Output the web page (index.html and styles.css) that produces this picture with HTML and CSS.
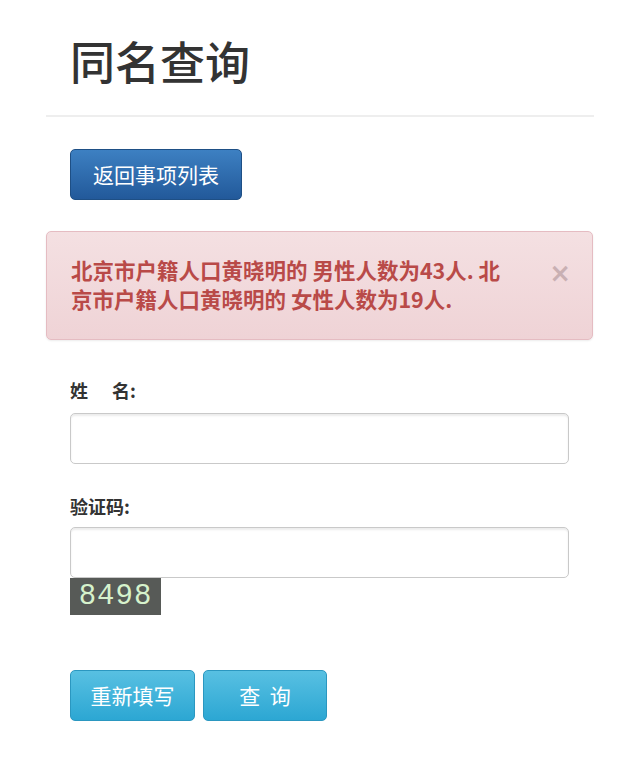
FILE: index.html
```html
<!DOCTYPE html>
<html lang="zh-CN">
<head>
<meta charset="utf-8">
<title>同名查询</title>
<link rel="stylesheet" href="styles.css">
</head>
<body>
<div class="page">
  <h1 class="title">同名查询</h1>
  <hr class="divider">
  <div class="inner">
    <button class="btn btn-primary">返回事项列表</button>
  </div>
  <div class="alert">
    <div class="alert-text">北京市户籍人口黄晓明的 男性人数为43人. 北<br>京市户籍人口黄晓明的 女性人数为19人.</div>
    <span class="alert-close">×</span>
  </div>
  <form class="inner form">
    <label class="label">姓<span class="sp"></span>名:</label>
    <input class="input" type="text">
    <label class="label label-2">验证码:</label>
    <input class="input" type="text">
    <div class="captcha">8498</div>
    <div class="actions">
      <button type="button" class="btn btn-info btn-reset">重新填写</button>
      <button type="button" class="btn btn-info btn-query">查&nbsp;&nbsp;询</button>
    </div>
  </form>
</div>
</body>
</html>
```
FILE: styles.css
```css
* { box-sizing: border-box; }
html, body { margin: 0; padding: 0; background: #fff; }
body {
  font-family: "Noto Sans CJK SC", "Noto Sans", sans-serif;
  color: #333;
}
.page {
  width: 640px;
  padding: 0 46px;
}
.title {
  margin: 0;
  padding: 26px 0 0 24px;
  height: 115px;
  font-size: 45px;
  line-height: 70px;
  font-weight: 500;
  color: #333;
}
.divider {
  margin: 0;
  width: 548px;
  border: 0;
  border-top: 2px solid #eeeeee;
}
.inner { padding-left: 24px; }
.btn {
  display: inline-flex;
  align-items: center;
  justify-content: center;
  height: 51px;
  border-radius: 5px;
  color: #fff;
  font-family: "Noto Sans CJK SC", sans-serif;
  font-size: 21px;
  padding: 0 0 2px;
  cursor: pointer;
}
.btn-primary {
  margin-top: 32px;
  width: 172px;
  background: linear-gradient(#3d80c2, #22599a);
  border: 1px solid #1e4f85;
}
.alert {
  margin-top: 31px;
  height: 109px;
  width: 547px;
  background: linear-gradient(#f4e0e2, #efd3d6);
  border: 1px solid #e5bcc2;
  border-radius: 5px;
  display: flex;
  justify-content: space-between;
  padding: 23px 24px 0 24px;
  box-shadow: 0 1px 2px rgba(0,0,0,0.08);
}
.alert-text {
  color: #b94a48;
  font-size: 21.5px;
  font-weight: 700;
  line-height: 29px;
}
.alert-close {
  color: #c9b0b3;
  font-size: 26px;
  line-height: 26px;
  font-weight: 700;
  margin-top: 5px;
  margin-right: -3px;
  font-family: "DejaVu Sans", sans-serif;
}
.form {
  display: flex;
  flex-direction: column;
  align-items: flex-start;
}
.label {
  margin-top: 37px;
  font-size: 18px;
  font-weight: 700;
  line-height: 26px;
  color: #333;
}
.sp { display: inline-block; width: 24px; }
.label-2 { margin-top: 29px; }
.input {
  margin-top: 10px;
  width: 499px;
  height: 51px;
  border: 1px solid #c9c9c9;
  border-radius: 5px;
  box-shadow: inset 0 2px 2px rgba(0,0,0,0.08);
  background: #fff;
}
.label-2 + .input { margin-top: 8px; }
.captcha {
  width: 91px;
  height: 37px;
  background: #575a57;
  color: #d6f2cc;
  font-family: "Liberation Mono", monospace;
  font-size: 29px;
  line-height: 37px;
  letter-spacing: 1px;
  text-align: center;
}
.actions {
  margin-top: 55px;
  display: flex;
  gap: 8px;
}
.btn-info {
  background: linear-gradient(#58c0e2, #2ca7d3);
  border: 1px solid #2b97c0;
}
.btn-reset { width: 125px; }
.btn-query { width: 124px; }
```
